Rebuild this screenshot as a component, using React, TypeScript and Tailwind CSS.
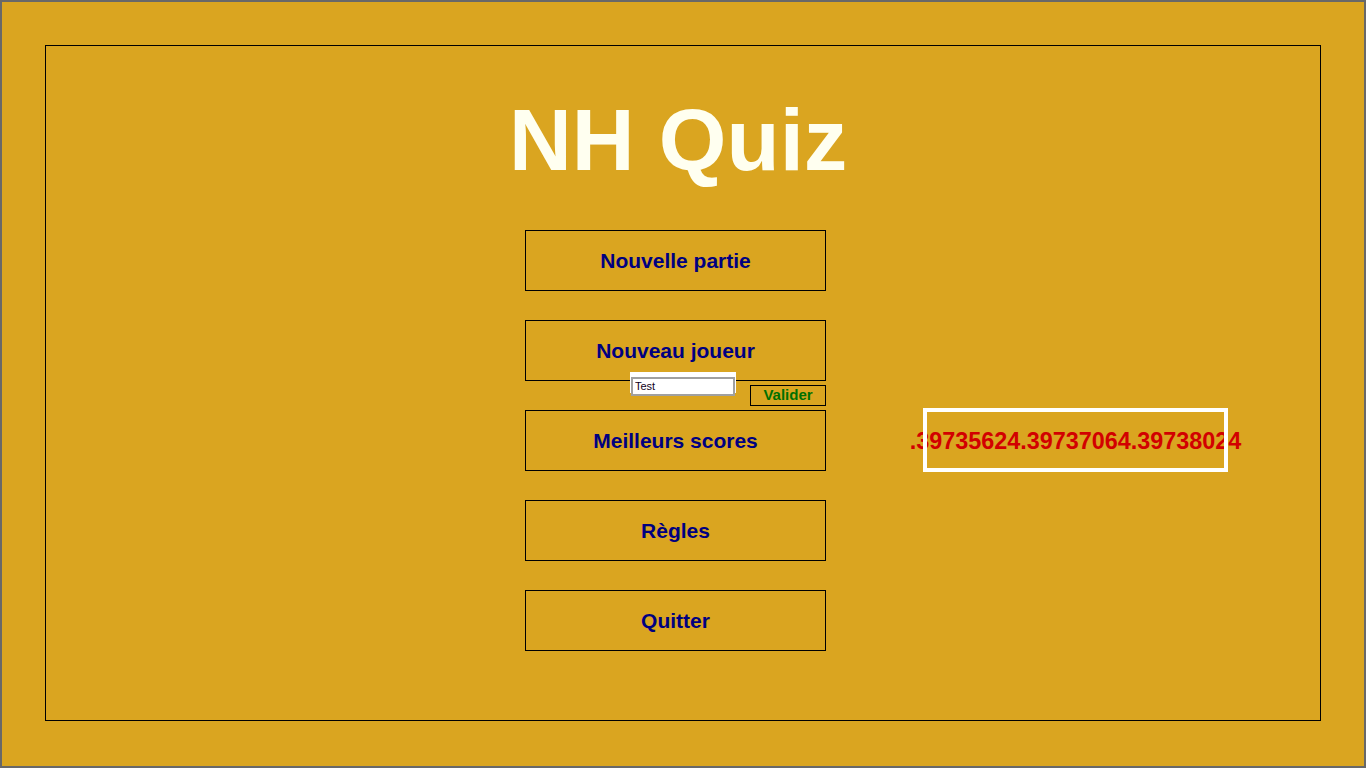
import React from "react";

const menu = ["Nouvelle partie", "Nouveau joueur", "Meilleurs scores", "Règles", "Quitter"];

function MenuButton({ label }: { label: string }) {
  return (
    <button
      type="button"
      className="flex h-[61px] w-[301px] items-center justify-center border border-black bg-transparent text-[21px] font-bold text-[#000080]"
    >
      {label}
    </button>
  );
}

export default function App() {
  return (
    <div
      className="h-[768px] w-full border-2 border-[#686868] bg-[#daa520] px-[43px] pt-[43px]"
      style={{ fontFamily: '"Liberation Sans", Arial, sans-serif' }}
    >
      <div className="flex h-[676px] flex-col items-start border border-black pl-[463px] pt-[50px]">
        <h1 className="w-[334px] whitespace-nowrap text-center text-[87px] font-bold leading-none text-[#fffff0]">
          NH Quiz
        </h1>
        <div className="mt-[47px] ml-[16px] flex w-[301px] flex-col gap-[29px]">
          {menu.map((label) => (
            <div key={label} className="relative">
              <MenuButton label={label} />
              {label === "Nouveau joueur" && (
                <>
                  <div className="absolute left-[105px] top-[52px] h-[21px] w-[106px] border border-white bg-white">
                    <input
                      defaultValue="Test"
                      className="h-full w-full border-2 border-[#a0a0a0] bg-white px-[2px] text-[11px] leading-none text-[#100018] outline-none"
                    />
                  </div>
                  <button
                    type="button"
                    className="absolute left-[225px] top-[65px] flex h-[21px] w-[76px] items-center justify-center border border-black text-[15px] font-bold text-[#007000]"
                  >
                    Valider
                  </button>
                </>
              )}
              {label === "Meilleurs scores" && (
                <div className="absolute left-[398px] top-[-2px] flex h-[64px] w-[305px] items-center justify-center pt-[4px]">
                  <span className="whitespace-nowrap text-[23.4px] font-bold leading-none text-[#d20000]">
                    .39735624.39737064.39738024
                  </span>
                  <div className="absolute inset-0 border-4 border-white" />
                </div>
              )}
            </div>
          ))}
        </div>
      </div>
    </div>
  );
}
